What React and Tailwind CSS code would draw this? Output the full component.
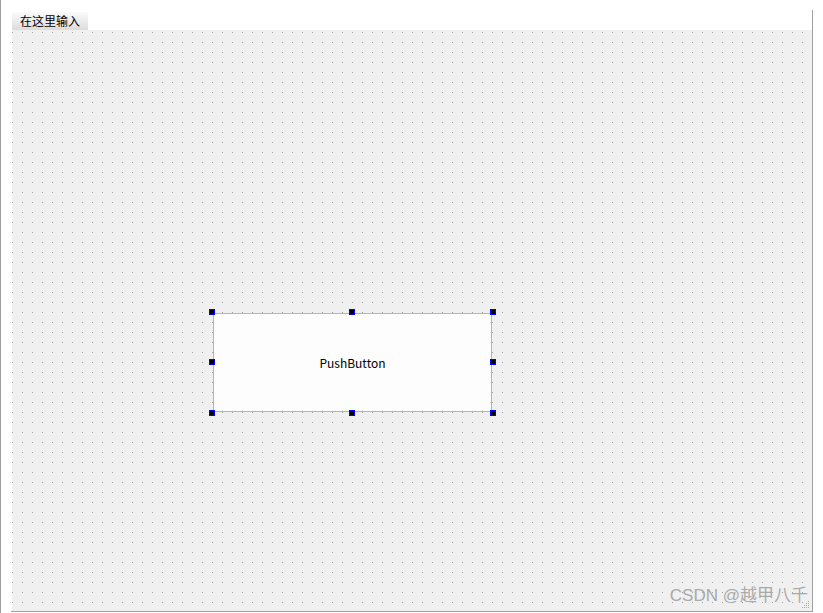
export default function App() {
  const handles = [
    'left-[-5px] top-[-5px]',
    'left-[135px] top-[-5px]',
    'right-[-5px] top-[-5px]',
    'left-[-5px] top-[45px]',
    'right-[-5px] top-[45px]',
    'left-[-5px] bottom-[-5px]',
    'left-[135px] bottom-[-5px]',
    'right-[-5px] bottom-[-5px]',
  ]

  return (
    <div className="relative h-[613px] w-[823px] overflow-hidden bg-white border-l border-[#a0a0a0] font-['Noto_Sans_CJK_SC','Noto_Sans',sans-serif] text-[12px] text-black">
      <div className="ml-[10px] mt-[10px] flex h-[602px] w-[802px] flex-col border-r border-b border-[#a0a0a0]">
        {/* menu bar */}
        <div className="flex h-[20px] items-end pl-[1px]">
          <div className="flex h-[18px] w-[76px] items-center bg-gradient-to-b from-[#fafafa] via-[#ececec] to-[#dcdcdc] pl-[8px] leading-none">
            在这里输入
          </div>
        </div>

        {/* form canvas */}
        <div className="relative flex-1 ml-[1px] bg-[#f0f0f0] bg-[linear-gradient(90deg,#f0f0f0_9px,transparent_9px),linear-gradient(#f0f0f0_9px,#a0a0a0_9px)] [background-size:10px_10px] [background-position:1px_3px]">
          <div className="pl-[201px] pt-[283px]">
            <div className="relative flex h-[99px] w-[279px] items-center justify-center border border-[#b4b4b4] bg-[#fdfdfd]">
              PushButton
              {handles.map((h) => (
                <span key={h} className={`absolute h-[6px] w-[6px] border border-[#0000ff] bg-black ${h}`} />
              ))}
            </div>
          </div>

          {/* size grip */}
          <svg className="absolute bottom-[2px] right-[2px]" width="8" height="8" viewBox="0 0 8 8">
            <rect x="6" y="0" width="1" height="1" fill="#a8a8a8" />
            <rect x="4" y="2" width="1" height="1" fill="#a8a8a8" />
            <rect x="6" y="2" width="1" height="1" fill="#a8a8a8" />
            <rect x="2" y="4" width="1" height="1" fill="#a8a8a8" />
            <rect x="4" y="4" width="1" height="1" fill="#a8a8a8" />
            <rect x="6" y="4" width="1" height="1" fill="#a8a8a8" />
            <rect x="0" y="6" width="1" height="1" fill="#a8a8a8" />
            <rect x="2" y="6" width="1" height="1" fill="#a8a8a8" />
            <rect x="4" y="6" width="1" height="1" fill="#a8a8a8" />
            <rect x="6" y="6" width="1" height="1" fill="#a8a8a8" />
          </svg>
        </div>
      </div>

      {/* watermark */}
      <div className="absolute right-[15px] bottom-[9px] font-['Liberation_Sans','Noto_Sans_CJK_SC',sans-serif] text-[17px] leading-none text-[#a9a9a9]">
        CSDN @越甲八千
      </div>
    </div>
  )
}
